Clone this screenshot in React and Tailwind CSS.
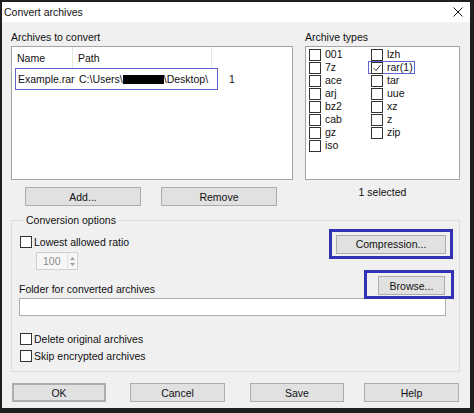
import React from 'react';

const COL_A = ['001', '7z', 'ace', 'arj', 'bz2', 'cab', 'gz', 'iso'];
const COL_B = ['lzh', 'rar(1)', 'tar', 'uue', 'xz', 'z', 'zip'];

const Box = ({ checked }) => (
  <span className="inline-flex w-[12px] h-[12px] shrink-0 border border-[#333] bg-white items-center justify-center">
    {checked && (
      <svg width="10" height="10" viewBox="0 0 10 10">
        <path d="M1.5 5 L4 7.5 L8.5 2" fill="none" stroke="#333" strokeWidth="1" />
      </svg>
    )}
  </span>
);

const Btn = ({ children, className = '' }) => (
  <div className={`h-[19px] bg-[#e1e1e1] border border-[#adadad] flex items-center justify-center ${className}`}>
    {children}
  </div>
);

const TypeItem = ({ label, focused }) => (
  <div className="h-[13px] flex items-start">
    <div className={`flex items-start h-[13px] pl-[2px] pr-[1px] border ${focused ? 'border-[#6262cf]' : 'border-transparent'}`}>
      <Box checked={focused} />
      <span className="ml-[4px] -mt-[2px]">{label}</span>
    </div>
  </div>
);

export default function App() {
  return (
    <div className="w-[474px] h-[413px] bg-[#1f1f1f] pt-[2px] pl-[2px] pr-[4px] pb-[5px] font-['Liberation_Sans',Arial,sans-serif] text-[10.5px] leading-[14px] text-[#111]">
      <div className="h-full bg-[#f0f0f0] flex flex-col">
        {/* title bar */}
        <div className="h-[20px] bg-white flex items-center justify-between pl-[2px] pr-[7px] shrink-0">
          <span className="text-[10.5px]">Convert archives</span>
          <svg width="10" height="10" viewBox="0 0 10 10">
            <path d="M0.5 0.5 L9.5 9.5 M9.5 0.5 L0.5 9.5" stroke="#111" strokeWidth="1" />
          </svg>
        </div>

        <div className="pl-[9px] pr-[10px] pt-[8px]">
          {/* lists */}
          <div className="flex gap-[12px]">
            <div className="w-[282px]">
              <div className="h-[14px] mb-[2px]">Archives to convert</div>
              <div className="h-[134px] border border-[#a5a5a5] bg-white">
                <div className="h-[21px] flex items-center">
                  <div className="w-[61px] h-full pl-[5px] flex items-center border-r border-[#e5e5e5]">Name</div>
                  <div className="w-[139px] h-full pl-[5px] flex items-center border-r border-[#e5e5e5]">Path</div>
                </div>
                <div className="flex items-center">
                  <div className="ml-[3px] w-[203px] h-[22px] border border-[#6262cf] flex items-center">
                    <span className="w-[58px] pl-[2px]">Example.rar</span>
                    <span className="pl-[5px] flex items-center">
                      C:\Users\
                      <span className="inline-block w-[41px] h-[9px] bg-black" />
                      \Desktop\
                    </span>
                  </div>
                  <span className="ml-[11px]">1</span>
                </div>
              </div>
            </div>

            <div className="w-[155px]">
              <div className="h-[14px] mb-[2px]">Archive types</div>
              <div className="h-[134px] border border-[#a5a5a5] bg-white pt-[1px] flex">
                <div className="w-[62px] flex flex-col">
                  {COL_A.map((t) => (
                    <TypeItem key={t} label={t} />
                  ))}
                </div>
                <div className="flex flex-col">
                  {COL_B.map((t) => (
                    <TypeItem key={t} label={t} focused={t === 'rar(1)'} />
                  ))}
                </div>
              </div>
            </div>
          </div>

          {/* add / remove */}
          <div className="flex gap-[12px] mt-[7px]">
            <div className="w-[282px] flex">
              <Btn className="ml-[14px] w-[116px]">Add...</Btn>
              <Btn className="ml-[20px] w-[116px]">Remove</Btn>
            </div>
            <div className="w-[155px] text-center -mt-[2px]">1 selected</div>
          </div>

          {/* conversion options */}
          <fieldset className="mt-[7px] border border-[#dcdcdc] pl-[7px] pr-[6px] pb-[8px]">
            <legend className="ml-[5px] px-[2px] leading-[14px]">Conversion options</legend>

            <div className="flex justify-between items-start pt-[2px]">
              <div className="flex flex-col pl-[1px]">
                <div className="h-[14px] mt-[6px] flex items-center">
                  <Box />
                  <span className="ml-[2px]">Lowest allowed ratio</span>
                </div>
                <div className="ml-[16px] mt-[3px] w-[42px] h-[18px] border border-[#cfcfcf] bg-[#f7f7f7] flex items-center">
                  <span className="pl-[6px] text-[#8a8a8a] flex-1">100</span>
                  <div className="w-[10px] h-full flex flex-col items-center justify-center gap-[3px] border-l border-[#e2e2e2]">
                    <svg width="5" height="3" viewBox="0 0 5 3"><path d="M0 3 L2.5 0 L5 3 Z" fill="#9a9a9a" /></svg>
                    <svg width="5" height="3" viewBox="0 0 5 3"><path d="M0 0 L2.5 3 L5 0 Z" fill="#9a9a9a" /></svg>
                  </div>
                </div>
              </div>
              <div className="w-[124px] h-[30px] border-[3px] border-[#3232b4] flex items-center justify-center">
                <Btn className="w-[110px] h-[18px]">Compression...</Btn>
              </div>
            </div>

            <div className="h-[28px] flex justify-between items-start">
              <div className="mt-[12px]">Folder for converted archives</div>
              <div className="-mr-[1px] w-[90px] h-[29px] border-[3px] border-[#3232b4] pt-[3px] pl-[11px]">
                <Btn className="w-[67px]">Browse...</Btn>
              </div>
            </div>

            <div className="w-[427px] h-[18px] border border-[#adadad] bg-white" />

            <div className="mt-[16px] h-[14px] flex items-center pl-[1px]">
              <Box />
              <span className="ml-[2px]">Delete original archives</span>
            </div>
            <div className="mt-[3px] h-[14px] flex items-center pl-[1px]">
              <Box />
              <span className="ml-[2px]">Skip encrypted archives</span>
            </div>
          </fieldset>

          {/* bottom buttons */}
          <div className="flex mt-[11px]">
            <Btn className="ml-[1px] w-[94px] border-2 border-[#2b7bd4]">OK</Btn>
            <Btn className="ml-[24px] w-[95px]">Cancel</Btn>
            <Btn className="ml-[25px] w-[94px]">Save</Btn>
            <Btn className="ml-[20px] w-[95px]">Help</Btn>
          </div>
        </div>
      </div>
    </div>
  );
}
